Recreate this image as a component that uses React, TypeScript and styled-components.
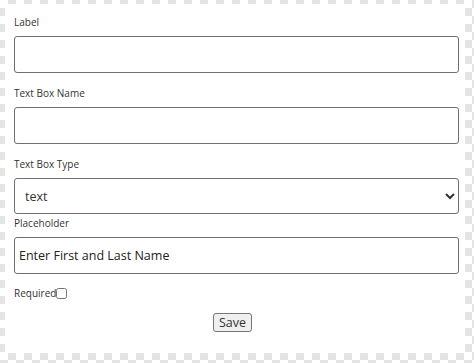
import React from 'react';
import styled, { createGlobalStyle } from 'styled-components';

const GlobalStyle = createGlobalStyle`
  html, body {
    margin: 0;
    padding: 0;
  }
  body {
    width: 474px;
    height: 363px;
    overflow: hidden;
    background-color: #ffffff;
    background-image:
      linear-gradient(45deg, #e4e4e4 25%, transparent 25%, transparent 75%, #e4e4e4 75%),
      linear-gradient(45deg, #e4e4e4 25%, transparent 25%, transparent 75%, #e4e4e4 75%);
    background-size: 16px 16px;
    background-position: 0 0, 8px 8px;
    font-family: 'Open Sans', 'Liberation Sans', sans-serif;
  }
`;

const Frame = styled.div`
  box-sizing: border-box;
  width: 474px;
  height: 363px;
  padding: 4px 9px 10px 5px;
  display: flex;
`;

const Panel = styled.form`
  flex: 1;
  background: #ffffff;
  padding: 11px 6px 0 9px;
  display: flex;
  flex-direction: column;
`;

const Field = styled.div<{ $gap?: number }>`
  display: flex;
  flex-direction: column;
  margin-bottom: ${p => p.$gap ?? 0}px;
`;

const Label = styled.label`
  font-size: 10px;
  color: #333;
  line-height: 14px;
  margin-bottom: 7px;
`;

const TextInput = styled.input`
  box-sizing: border-box;
  height: 37px;
  width: 100%;
  border: 1.5px solid #6f6f6f;
  border-radius: 3px;
  padding: 0 4px;
  font-family: 'Open Sans', 'Liberation Sans', sans-serif;
  font-size: 12.5px;
  color: #222;
  outline: none;
`;

const Select = styled.select`
  box-sizing: border-box;
  height: 36px;
  width: 100%;
  border: 1.5px solid #6f6f6f;
  border-radius: 3px;
  padding: 0 6px;
  font-family: 'Open Sans', 'Liberation Sans', sans-serif;
  font-size: 12.5px;
  color: #333;
  background: #fff;
`;

const RequiredRow = styled.label`
  display: flex;
  align-items: center;
  font-size: 10px;
  color: #333;
  margin-top: 12px;
  height: 14px;
`;

const Check = styled.input`
  margin: 0;
  width: 11px;
  height: 11px;
`;

const Actions = styled.div`
  display: flex;
  justify-content: center;
  margin-top: 13px;
  padding-right: 8px;
`;

const SaveButton = styled.button`
  font-family: 'Open Sans', 'Liberation Sans', sans-serif;
  font-size: 12.5px;
  color: #333;
  background: #efefef;
  border: 1px solid #767676;
  border-radius: 3px;
  padding: 0 5px;
  height: 19px;
  line-height: 15px;
`;

export default function App() {
  return (
    <>
      <GlobalStyle />
      <Frame>
        <Panel onSubmit={e => e.preventDefault()}>
          <Field $gap={13}>
            <Label>Label</Label>
            <TextInput type="text" />
          </Field>
          <Field $gap={13}>
            <Label>Text Box Name</Label>
            <TextInput type="text" />
          </Field>
          <Field $gap={2}>
            <Label>Text Box Type</Label>
            <Select defaultValue="text">
              <option value="text">text</option>
              <option value="email">email</option>
              <option value="number">number</option>
            </Select>
          </Field>
          <Field>
            <Label>Placeholder</Label>
            <TextInput type="text" defaultValue="Enter First and Last Name" />
          </Field>
          <RequiredRow>
            Required<Check type="checkbox" />
          </RequiredRow>
          <Actions>
            <SaveButton type="submit">Save</SaveButton>
          </Actions>
        </Panel>
      </Frame>
    </>
  );
}
